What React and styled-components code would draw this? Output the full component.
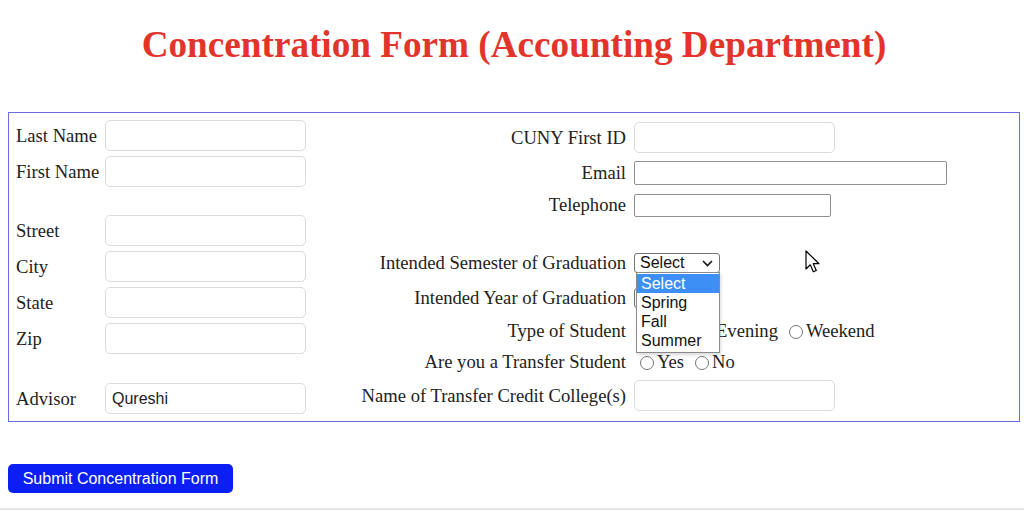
import React from 'react';
import styled, { createGlobalStyle } from 'styled-components';

const GlobalStyle = createGlobalStyle`
  html {
    overflow: hidden;
  }
  body {
    margin: 0;
    font-family: 'Liberation Serif', 'Times New Roman', serif;
    color: #222;
    background: #fff;
  }
`;

const Page = styled.div`
  position: relative;
  display: flow-root;
  box-sizing: border-box;
  height: 510px;
  padding: 8px 4px 0 8px;
  border-bottom: 2px solid #e6e6e6;
`;

const Title = styled.h1`
  color: #e3342b;
  font-size: 37.2px;
  font-weight: bold;
  text-align: center;
  margin: 15px 0 46px;
  line-height: normal;
`;

const Frame = styled.div`
  box-sizing: border-box;
  width: 100%;
  border: 1px solid #6b6be0;
  padding: 7px;
  display: flex;
`;

const LeftGrid = styled.div`
  display: grid;
  grid-template-columns: 89px 201px;
  row-gap: 5px;
  align-items: center;
  font-size: 18.6px;
`;

const Spacer = styled.div`
  grid-column: 1 / -1;
  height: ${(p) => p.$h}px;
`;

const RightGrid = styled.div`
  display: grid;
  grid-template-columns: 320px auto;
  grid-template-rows: 35px 36px 28px 26px 36px 34px 32px 30px 37px;
  column-gap: 8px;
  align-items: center;
  font-size: 18.6px;
`;

const RightLabel = styled.label`
  text-align: right;
  grid-column: 1;
`;

const Control = styled.div`
  grid-column: 2;
  display: flex;
  align-items: center;
  position: relative;
`;

const Label = styled.label``;

const RoundInput = styled.input`
  box-sizing: border-box;
  width: 201px;
  height: 31px;
  border: 1px solid #dcdcdc;
  border-radius: 5px;
  padding: 0 6px;
  font-family: 'Liberation Sans', Arial, sans-serif;
  font-size: 16px;
  color: #222;
  outline: none;
`;

const PlainInput = styled.input`
  box-sizing: border-box;
  width: ${(p) => p.$w}px;
  height: ${(p) => p.$h}px;
  border: 1px solid #8f8f8f;
  border-radius: 2px;
  padding: 0 4px;
  font-family: 'Liberation Sans', Arial, sans-serif;
  font-size: 15px;
  outline: none;
`;

const FakeSelect = styled.div`
  box-sizing: border-box;
  width: 86px;
  height: 20px;
  border: 1px solid #767676;
  border-radius: 3px;
  display: flex;
  align-items: center;
  justify-content: space-between;
  padding: 0 6px 0 5px;
  font-family: 'Liberation Sans', Arial, sans-serif;
  font-size: 16px;
  color: #111;
  background: #fff;
`;

const Options = styled.ul`
  position: absolute;
  top: 19px;
  left: 2px;
  z-index: 5;
  box-sizing: border-box;
  width: 84px;
  margin: 0;
  padding: 1px 0 2px;
  list-style: none;
  background: #fff;
  border: 1px solid #8a8a8a;
  box-shadow: 1px 2px 3px rgb(0 0 0 / 15%);
  font-family: 'Liberation Sans', Arial, sans-serif;
  font-size: 16px;
`;

const Option = styled.li`
  height: 19px;
  line-height: 19px;
  padding-left: 4px;
  color: ${(p) => (p.$active ? '#fff' : '#111')};
  background: ${(p) => (p.$active ? '#3d8ff5' : 'transparent')};
`;

const Radio = styled.span`
  display: inline-block;
  box-sizing: border-box;
  width: 14px;
  height: 14px;
  border: 1px solid #767676;
  border-radius: 50%;
  margin: 2px 3px 0 ${(p) => (p.$first ? 6 : 11)}px;
`;

const RadioText = styled.span`
  font-size: 18.6px;
`;

const SubmitButton = styled.button`
  margin-top: 42px;
  width: 225px;
  height: 29px;
  padding: 0;
  border: none;
  border-radius: 5px;
  background: #0b1ff4;
  color: #fff;
  font-family: 'Liberation Sans', Arial, sans-serif;
  font-size: 16px;
`;

const Pointer = styled.svg`
  position: absolute;
  left: 805px;
  top: 250px;
`;

function Chevron() {
  return (
    <svg width="11" height="7" viewBox="0 0 11 7">
      <path d="M1 1l4.5 4.5L10 1" fill="none" stroke="#111" strokeWidth="1.6" />
    </svg>
  );
}

function RadioGroup({ options }) {
  return options.map((o, i) => (
    <React.Fragment key={o}>
      <Radio $first={i === 0} />
      <RadioText>{o}</RadioText>
    </React.Fragment>
  ));
}

const leftRows = [
  ['Last Name', ''],
  ['First Name', ''],
  null,
  ['Street', ''],
  ['City', ''],
  ['State', ''],
  ['Zip', ''],
  null,
  ['Advisor', 'Qureshi'],
];

export default function App() {
  return (
    <Page>
      <GlobalStyle />
      <Title>Concentration Form (Accounting Department)</Title>
      <Frame>
        <LeftGrid>
          {leftRows.map((row, i) =>
            row ? (
              <React.Fragment key={i}>
                <Label>{row[0]}</Label>
                <RoundInput defaultValue={row[1]} />
              </React.Fragment>
            ) : (
              <Spacer key={i} $h={i === 2 ? 18 : 19} />
            )
          )}
        </LeftGrid>
        <RightGrid>
          <RightLabel style={{ gridRow: 1 }}>CUNY First ID</RightLabel>
          <Control style={{ gridRow: 1 }}>
            <RoundInput />
          </Control>
          <RightLabel style={{ gridRow: 2 }}>Email</RightLabel>
          <Control style={{ gridRow: 2 }}>
            <PlainInput $w={313} $h={24} />
          </Control>
          <RightLabel style={{ gridRow: 3 }}>Telephone</RightLabel>
          <Control style={{ gridRow: 3 }}>
            <PlainInput $w={197} $h={23} />
          </Control>
          <RightLabel style={{ gridRow: 5 }}>Intended Semester of Graduation</RightLabel>
          <Control style={{ gridRow: 5 }}>
            <FakeSelect>
              Select
              <Chevron />
            </FakeSelect>
            <Options>
              <Option $active>Select</Option>
              <Option>Spring</Option>
              <Option>Fall</Option>
              <Option>Summer</Option>
            </Options>
          </Control>
          <RightLabel style={{ gridRow: 6 }}>Intended Year of Graduation</RightLabel>
          <Control style={{ gridRow: 6 }}>
            <FakeSelect>
              Select
              <Chevron />
            </FakeSelect>
          </Control>
          <RightLabel style={{ gridRow: 7 }}>Type of Student</RightLabel>
          <Control style={{ gridRow: 7 }}>
            <RadioGroup options={['Day', 'Evening', 'Weekend']} />
          </Control>
          <RightLabel style={{ gridRow: 8 }}>Are you a Transfer Student</RightLabel>
          <Control style={{ gridRow: 8 }}>
            <RadioGroup options={['Yes', 'No']} />
          </Control>
          <RightLabel style={{ gridRow: 9 }}>Name of Transfer Credit College(s)</RightLabel>
          <Control style={{ gridRow: 9 }}>
            <RoundInput />
          </Control>
        </RightGrid>
      </Frame>
      <SubmitButton type="button">Submit Concentration Form</SubmitButton>
      <Pointer width="16" height="24" viewBox="0 0 16 24">
        <path
          d="M1 1v18l4.3-4.2 3 7 3-1.3-3-6.8H14z"
          fill="#fff"
          stroke="#000"
          strokeWidth="1.2"
          strokeLinejoin="round"
        />
      </Pointer>
    </Page>
  );
}
